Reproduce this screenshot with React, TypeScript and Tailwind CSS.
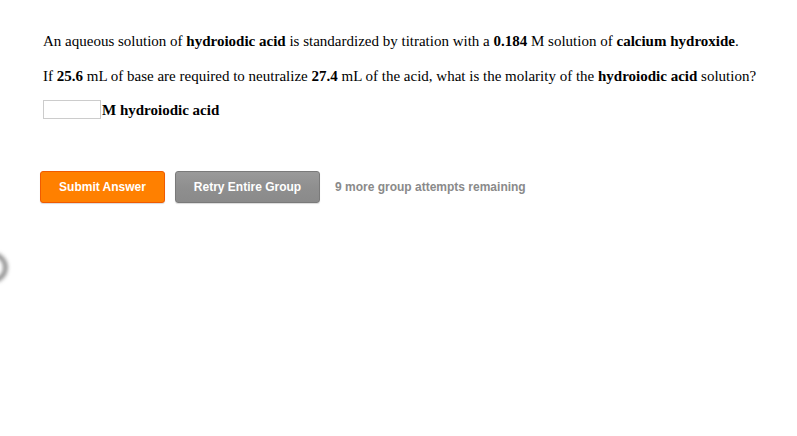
import React from "react";

export default function App() {
  return (
    <div className="relative w-[797px] h-[436px] bg-white overflow-hidden">
      <div className="absolute left-[-22px] top-[253px] w-[29px] h-[29px] rounded-full border-[3px] border-[#555] blur-[2px]" />
      <div className="pl-[43px] pt-[32px] text-[15px] leading-[18px] text-black" style={{ fontFamily: '"Liberation Serif", "Times New Roman", serif' }}>
        <p>
          An aqueous solution of <b>hydroiodic acid</b> is standardized by titration with a <b>0.184</b> M solution of <b>calcium hydroxide</b>.
        </p>
        <p className="mt-[17px]">
          If <b>25.6</b> mL of base are required to neutralize <b>27.4</b> mL of the acid, what is the molarity of the <b>hydroiodic acid</b> solution?
        </p>
        <div className="mt-[15px] flex items-center">
          <div className="w-[58px] h-[19px] border border-[#cccccc] bg-white" />
          <b className="ml-[1px]">M hydroiodic acid</b>
        </div>
      </div>
      <div className="mt-[52px] pl-[40px] flex items-center" style={{ fontFamily: '"Liberation Sans", Arial, sans-serif' }}>
        <div className="w-[125px] h-[32px] rounded-[3px] border border-[#f05a00] bg-[#ff8000] flex items-center justify-center text-white font-bold text-[12px] shadow-[0_1px_1px_rgba(0,0,0,0.15)]">
          Submit Answer
        </div>
        <div className="ml-[10px] w-[145px] h-[32px] rounded-[3px] border border-[#7a7a7a] bg-gradient-to-b from-[#9a9a9a] via-[#8f8f8f] to-[#8a8a8a] flex items-center justify-center text-white font-bold text-[12px] shadow-[0_1px_1px_rgba(0,0,0,0.15)]">
          Retry Entire Group
        </div>
        <span className="ml-[15px] text-[12px] font-bold text-[#8a8a8a]">9 more group attempts remaining</span>
      </div>
    </div>
  );
}
